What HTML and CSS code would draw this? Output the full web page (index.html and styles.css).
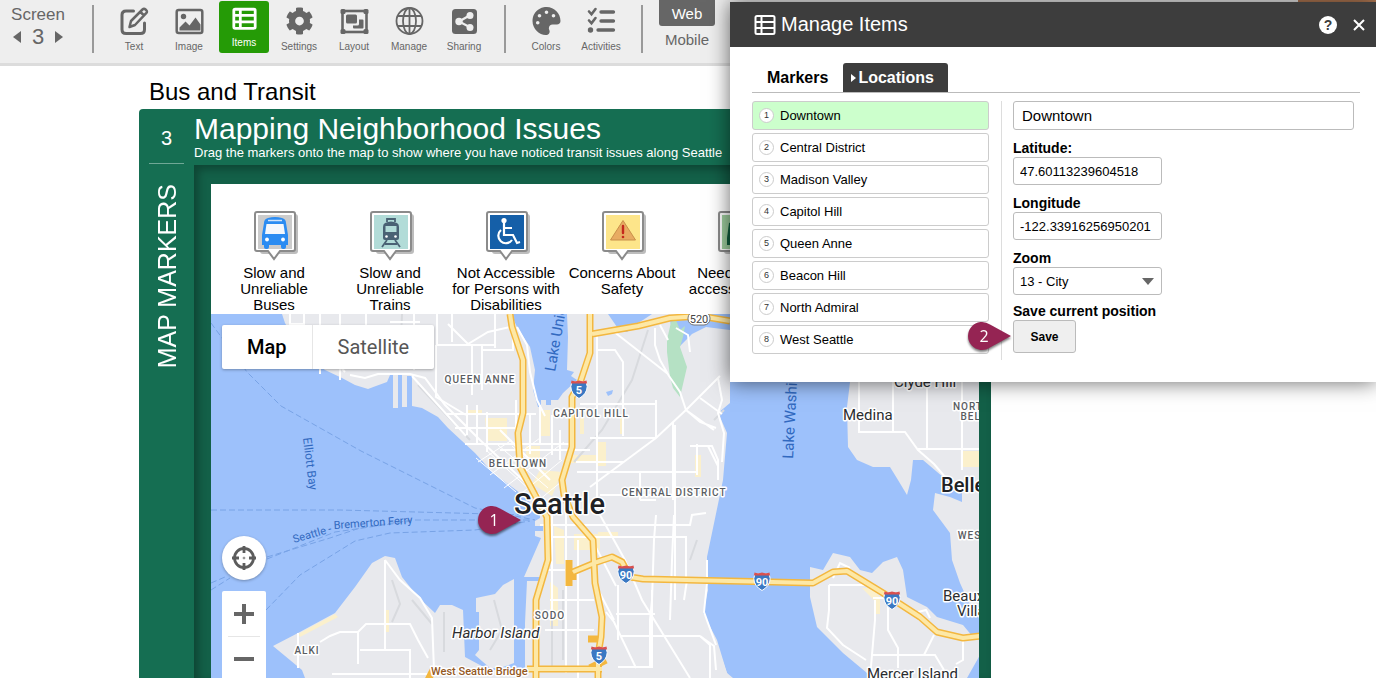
FILE: index.html
```
<!DOCTYPE html>
<html lang="en">
<head>
  <meta charset="UTF-8" />
  <meta name="viewport" content="width=device-width, initial-scale=1.0"/>
  <title>Mapping Neighborhood Issues</title>
  <link rel="stylesheet" href="styles.css">
</head>
<body>

  <header class="toolbar">
    <div class="screen-nav">
      <span class="screen-label">Screen</span>
      <div class="screen-pager">
        <button class="arrow arrow-prev" aria-label="Previous screen"></button>
        <span class="screen-number">3</span>
        <button class="arrow arrow-next" aria-label="Next screen"></button>
      </div>
    </div>

    <nav class="tools">
      <button class="tool">
        <svg class="icon" viewBox="0 0 28 28"><path d="M13 4H5.500Q1.500 4 1.500 8v14.500q0 4 4 4H20q4 0 4-4V16" fill="none" stroke="currentColor" stroke-width="3" stroke-linecap="round"/><path d="M9 20l1.500-6L22 2.500q1.500-1.500 3 0l.7.700q1.500 1.500 0 3L14.500 18zM20 5l3.500 3.500" fill="none" stroke="currentColor" stroke-width="2.500" stroke-linejoin="round"/></svg>
        Text
      </button>
      <button class="tool">
        <svg class="icon" viewBox="0 0 28 28"><rect x="1.200" y="3" width="25.600" height="23" rx="2" fill="none" stroke="currentColor" stroke-width="2.500"/><circle cx="8" cy="9.500" r="2.700" fill="currentColor"/><path d="M4 23.500v-3l6-6 4 4 6-8 5 7v6z" fill="currentColor"/></svg>
        Image
      </button>
      <button class="tool tool-active">
        <svg class="icon" viewBox="0 0 28 28"><path d="M4 3.500h20q1.500 0 1.500 1.500v17.500q0 1.500-1.500 1.500H4q-1.500 0-1.500-1.500V5q0-1.500 1.500-1.500zM2.500 10.200h23M2.500 17h23M9.500 3.500V24" fill="none" stroke="currentColor" stroke-width="3"/></svg>
        Items
      </button>
      <button class="tool">
        <svg class="icon" viewBox="0 0 512 512"><path fill="currentColor" d="M487.400 315.700l-42.600-24.600c4.300-23.200 4.300-47 0-70.200l42.600-24.600c4.900-2.800 7.100-8.600 5.500-14-11.100-35.600-30-67.800-54.700-94.600-3.800-4.100-10-5.100-14.800-2.300L380.800 110c-17.900-15.400-38.500-27.300-60.800-35.100V25.800c0-5.600-3.900-10.500-9.400-11.700-36.700-8.200-74.300-7.800-109.200 0-5.500 1.200-9.400 6.100-9.400 11.700V75c-22.200 7.900-42.800 19.800-60.800 35.100L88.700 85.500c-4.900-2.800-11-1.900-14.800 2.300-24.700 26.700-43.600 58.900-54.700 94.600-1.700 5.400.6 11.200 5.500 14L67.300 221c-4.300 23.200-4.300 47 0 70.200l-42.600 24.600c-4.900 2.800-7.100 8.600-5.500 14 11.100 35.600 30 67.800 54.700 94.600 3.800 4.100 10 5.100 14.800 2.300l42.600-24.600c17.900 15.400 38.500 27.300 60.800 35.100v49.200c0 5.600 3.900 10.500 9.400 11.700 36.700 8.200 74.300 7.800 109.200 0 5.500-1.200 9.400-6.100 9.400-11.700v-49.200c22.200-7.900 42.800-19.800 60.800-35.100l42.600 24.600c4.900 2.800 11 1.900 14.800-2.300 24.700-26.700 43.600-58.900 54.700-94.600 1.500-5.500-.7-11.300-5.600-14.100zM256 336c-44.100 0-80-35.900-80-80s35.900-80 80-80 80 35.900 80 80-35.900 80-80 80z"/></svg>
        Settings
      </button>
      <button class="tool">
        <svg class="icon" viewBox="0 0 28 28"><rect x="2" y="4" width="24" height="21" fill="none" stroke="currentColor" stroke-width="2.600"/><g fill="currentColor"><rect x="0" y="2" width="5" height="5" rx="1.500"/><rect x="23" y="2" width="5" height="5" rx="1.500"/><rect x="0" y="22" width="5" height="5" rx="1.500"/><rect x="23" y="22" width="5" height="5" rx="1.500"/><rect x="5.500" y="7.500" width="11" height="9" rx="1.500"/><path d="M18.500 12.500h3.500q1 0 1 1v7q0 1-1 1h-8.500q-1 0-1-1v-2h4.500q1.500 0 1.500-1.500z"/></g></svg>
        Layout
      </button>
      <button class="tool">
        <svg class="icon" viewBox="0 0 28 28"><g fill="none" stroke="currentColor" stroke-width="1.800"><circle cx="14" cy="14" r="13"/><ellipse cx="14" cy="14" rx="6.500" ry="13"/><path d="M14 1v26M2.500 9h23M2.500 19h23"/></g></svg>
        Manage
      </button>
      <button class="tool">
        <svg class="icon" viewBox="0 0 28 28"><rect x="1.500" y="2" width="25" height="25" rx="3.500" fill="currentColor"/><path d="M19 8.500L8.500 14.500 19 20" fill="none" stroke="#eee" stroke-width="2.200"/><g fill="#eee"><circle cx="19.500" cy="8.500" r="3.500"/><circle cx="8.500" cy="14.500" r="3.700"/><circle cx="19.500" cy="20.500" r="3.500"/></g></svg>
        Sharing
      </button>
    </nav>

    <nav class="tools tools-short">
      <button class="tool">
        <svg class="icon" viewBox="0 0 512 512"><path fill="currentColor" d="M204.300 5C104.900 24.400 24.800 104.300 5.200 203.400c-37 187 131.700 326.400 258.800 306.700 41.200-6.400 61.400-54.600 42.500-91.700-23.100-45.400 9.900-98.400 60.900-98.400h79.700c35.800 0 64.800-29.600 64.900-65.300C511.500 97.100 368.100-26.900 204.300 5zM96 320c-17.700 0-32-14.300-32-32s14.300-32 32-32 32 14.300 32 32-14.300 32-32 32zm32-128c-17.700 0-32-14.300-32-32s14.300-32 32-32 32 14.300 32 32-14.300 32-32 32zm128-64c-17.700 0-32-14.300-32-32s14.300-32 32-32 32 14.300 32 32-14.300 32-32 32zm128 64c-17.700 0-32-14.300-32-32s14.300-32 32-32 32 14.300 32 32-14.300 32-32 32z"/></svg>
        Colors
      </button>
      <button class="tool">
        <svg class="icon" viewBox="0 0 28 28"><g fill="none" stroke="currentColor" stroke-linecap="round"><path d="M13.500 5H26M13.500 14H26M10.500 23H26" stroke-width="3.300"/><path d="M1.500 4.500L4 7.300 8 2M1.500 13.500L4 16.300 8 11" stroke-width="2.600"/></g><circle cx="3" cy="23" r="2.700" fill="currentColor"/></svg>
        Activities
      </button>
    </nav>

    <div class="device">
      <button class="device-option device-active">Web</button>
      <button class="device-option">Mobile</button>
    </div>
    <span class="toolbar-accent"></span>
  </header>

  <main class="stage">
    <h1 class="page-title">Bus and Transit</h1>

    <section class="board">
      <aside class="board-side">
        <span class="board-number">3</span>
        <span class="board-caption">MAP MARKERS</span>
      </aside>
      <div class="board-main">
        <div class="board-head">
          <h2 class="board-title">Mapping Neighborhood Issues</h2>
          <p class="board-text">Drag the markers onto the map to show where you have noticed transit issues along Seattle</p>
        </div>
        <div class="board-body">
          <ul class="markers">
            <li class="marker">
              <svg class="pin" viewBox="0 0 44 50">
                <use href="#pin-frame"/>
                <rect x="4" y="4" width="34" height="34" fill="#ccc"/>
                <g fill="#2b8cf2"><path d="M10 12q0-4 4-5 7-2 14 0 4 1 4 5l2 12v10H8V24z"/><rect x="10" y="32" width="5" height="6" rx="2"/><rect x="27" y="32" width="5" height="6" rx="2"/></g>
                <path d="M12.500 13h17l1.500 10H11z" fill="#f4f8fd"/><path d="M14 9.500h14" stroke="#cfe3fa" stroke-width="1.500"/>
                <circle cx="13" cy="28.500" r="1.900" fill="#fff"/><circle cx="29" cy="28.500" r="1.900" fill="#fff"/>
              </svg>
              Slow and Unreliable Buses
            </li>
            <li class="marker">
              <svg class="pin" viewBox="0 0 44 50">
                <use href="#pin-frame"/>
                <rect x="4" y="4" width="34" height="34" fill="#b2dcd8"/>
                <path d="M15 12q6-3 12 0 2 1 2 4v11q0 2-2 2H15q-2 0-2-2V16q0-3 2-4z" fill="#4a6274"/>
                <path d="M17 29l-5 7M25 29l5 7M15 33h12M17 11V8h8v3" fill="none" stroke="#4a6274" stroke-width="1.800"/>
                <path d="M15.500 15h11v6h-11z" fill="#b2dcd8"/><circle cx="16.500" cy="25.500" r="1.300" fill="#fff"/><circle cx="25.500" cy="25.500" r="1.300" fill="#fff"/>
              </svg>
              Slow and Unreliable Trains
            </li>
            <li class="marker">
              <svg class="pin" viewBox="0 0 44 50">
                <use href="#pin-frame"/>
                <rect x="4" y="4" width="34" height="34" fill="#155fa8"/>
                <circle cx="18" cy="9.500" r="2.600" fill="#fff"/>
                <path d="M18 12v12h9l4 8 3-1M18 17h8M15 19a7.500 7.500 0 1 0 11 10" fill="none" stroke="#fff" stroke-width="2.200"/>
              </svg>
              Not Accessible for Persons with Disabilities
            </li>
            <li class="marker">
              <svg class="pin" viewBox="0 0 44 50">
                <use href="#pin-frame"/>
                <rect x="4" y="4" width="34" height="34" fill="#fde58a"/>
                <path d="M21 9.500L33.500 29h-25z" fill="#e8ab62" stroke="#c98f4a" stroke-width="1" stroke-linejoin="round"/>
                <path d="M21 15v7" stroke="#c5281c" stroke-width="2.400" stroke-linecap="round"/><circle cx="21" cy="26" r="1.300" fill="#c5281c"/>
              </svg>
              Concerns About Safety
            </li>
            <li class="marker">
              <svg class="pin" viewBox="0 0 44 50">
                <use href="#pin-frame"/>
                <rect x="4" y="4" width="34" height="34" fill="#9fcf9f"/>
                <path d="M11 12q10-5 20 0l2 15v7H9v-7z" fill="#11603f"/><path d="M13 15h16l1 8H12z" fill="#cfe8cf"/>
              </svg>
              Needs more accessible bus
            </li>
          </ul>

          <div class="map">
            <svg class="map-canvas" viewBox="211 314 768 364" preserveAspectRatio="xMinYMin slice" role="img" aria-label="Map of Seattle">
              <defs>
                <g id="pin-frame">
                  <rect x="6" y="3" width="38" height="40" rx="3" fill="#bdbdbd"/>
                  <path d="M3 1h36q2 0 2 2v35q0 2-2 2H26l-6 8-6-8H3q-2 0-2-2V3q0-2 2-2z" fill="#fff" stroke="#8b8b8b" stroke-width="2"/>
                </g>
                <g id="shield">
                  <path d="M-7-7.500h14l1.200 5Q8 5 0 9.500-8 5-8.200-2.500z" fill="#3a78c3" stroke="#fff" stroke-width="1"/>
                  <path d="M-7.500-8.500q3.500 1.500 7.500 0 4 1.500 7.500 0l.6 3H-8.100z" fill="#d8504f"/>
                </g>
              </defs>

              <!-- land -->
              <g class="land">
                <path d="M282 314L285 323 300 350 325 370 342 378 355 385 368 389 376 386 387 382 390 375H393V408H398V375H402V407H407V376H412V406L422 408 438 417 448 428 475 453 493 473 520 493 530 502 527 510 540 513V518L535 521V526H543V531H535V536L541 538 524 577H541V581H527L525 623V668L535 678H730L727 673 717 640 703 613 708 590 702 567 707 540 715 510 717 497 723 470 725 443 718 413 730 403V314z"/>
                <path d="M730 314V390L722 404 720 417 727 433 723 480 707 557V583L703 613 720 653 727 673 733 678H700V314z"/>
                <path d="M850 314V382L847 407 848 447 857 460 873 467 890 467 898 480 907 495 911 480 913 460 923 460 943 477 962 493V502L950 497 935 493 933 510 950 533 952 560 960 583 970 605 980 620V314z"/>
                <path d="M810 567L823 570 833 553 850 557 860 570 872 573 883 562 897 557 903 570 907 597 927 607 937 617 963 625 973 637 980 640V655L967 678H873L867 673 843 653 817 627 810 597z"/>
                <path d="M273 646L298 633 335 613 355 587 372 563 385 556 395 558 402 577 418 597 435 613 440 605 452 605 463 610 465 657 478 664 490 670 535 671V678H305L302 670z"/>
                <path d="M476 598L495 594 503 585 514 579V663L500 668 490 668 475 655 479 650V612H476z"/>
              </g>
              <path class="water" d="M511 314L517 327 530 347 535 370 533 390 538 407H541V400H546V405H551V400L558 400 563 393 577 380 571 376 574 372 567 370 568 337 567 314zM608 314L617 327 620 331 627 332 634 325 643 320 652 314zM670 320L684 314H730V330L706 327 692 334 680 346 674 342zM606 392L613 390 612 394 608 396z"/>
              <path class="park" d="M667 340L671 322 676 320 680 330 685 326 683 337 680 347 687 367 680 397 673 388 670 377 667 352z"/>
              <g class="built">
                <path d="M485 418h22v23h-20zM466 410h16v5h-16zM540 410h10v26h-10zM598 442h8v24h-8zM526 446h14v12h-14zM566 455h36v8h-36zM540 470l22 2-10 24-20-12zM554 526l10 4v34h-8zM574 534h26v16h-26zM598 532h20v6h-20zM550 582l8 6v38h-8zM695 455v22h6v-22zM963 451h16v16h-16zM862 588h12l6 10v16h-6v-14zM384 610h5v22h-5zM620 418h3v16h-3zM580 418h4v16h-4z"/>
                <path d="M298 634L335 614 338 617 300 637z"/>
              </g>

              <!-- terrain creases and rail lines -->
              <path class="crease" d="M648 330L632 380 602 430 574 462M552 600V670M563 590V660M578 600V670M392 580L400 604 392 622M412 600L432 624M494 600L502 630 490 650M444 612V652M402 314L400 364M418 385L470 440M697 540L690 560M724 410L714 420"/>

              <!-- local streets -->
              <g class="street">
                <path d="M290 314v10h14v-10M320 314v60M340 314v66M366 314v50M390 322h30M414 314v56M436 345h60M452 314v28M472 345v50M482 350h32M482 345v45M448 324l20 20 20-12 26-6M495 314v34M436 345v52l30 18M446 414h90M455 428h64M465 444h104M500 450h90M513 328v22M437 314v31"/>
                <path d="M350 375L365 378 378 374H410L425 378 445 405 480 440 540 496M345 372L340 366M412 376L430 396 466 436M517 327L527 345 530 372 537 400 545 416M474 414H520M500 430L550 480"/>
                <path d="M467 405v30M477 405v40M487 412v40M516 400v30M540 405v40M552 415v40M560 430v30M530 414v40"/>
                <path class="thin" d="M476 458L516 492M486 450L530 490M498 445L548 488M512 446L548 478M478 462L512 440M490 475L540 438M504 488L564 442M516 498L562 460M534 504L566 478"/>
                <path d="M597 330V498M597 350H615L623 362V436M613 331L668 374M612 330H600M655 328V345L660 360 669 376M669 376L680 392 686 410M676 328L688 335 690 352M660 325L668 340M580 404H656M590 438H656M576 462H624M577 472H697M656 400V438M686 410L714 430M720 376L686 410 656 438 590 487M675 425V600M690 446H708L718 466M697 444V475M640 472V500M686 410L700 422 716 428M673 422V500"/>
                <path d="M540 525H690L692 515 706 513M545 537H686V580M687 580L684 600M566 505V673M578 540V678M545 570H570M550 600H594M545 630H594M572 510L590 536 616 586M600 515L625 560 642 600 690 678M656 515L654 540 652 600 650 620V668M674 515L672 560 670 620M618 585V640M616 614H655M620 636H700M652 590V667H618M606 612L614 622 636 668M700 636L714 646 716 670M594 582L614 620M555 500V510M640 500L656 500M552 500V620M600 495L700 495"/>
                <path d="M385 560V624M385 560L400 580 420 598 432 618 434 670M298 633V668M320 642L330 636 340 632H358L366 624H410L418 640 428 658M358 632V664M385 624V650H410V678M332 674H430M360 650H384"/>
                <path d="M859 382V432H905L918 450 934 464 946 478M893 382V432M927 382V449M962 382V470M918 449H979M829 585H870M829 585V610L827 628 843 645 866 660M888 600V630L898 648V668M875 600V620L872 655H935L944 670M924 655L934 635M963 640V660L956 664M873 598H888M833 578L840 563 850 568M872 655L870 678M918 612L926 610 930 618"/>
                <path d="M718 378L722 400 718 413 724 433 722 462M700 398L722 414M700 446H712L718 460 718 480M707 560V583L704 612 716 645M700 636L710 645V678"/>
              </g>

              <!-- ferry routes -->
              <g class="ferry">
                <path d="M211 323L247 372 281 406 361 451 475 508 535 520M211 510H340L530 515M267 557L330 538 360 528 412 520H530M267 559L335 532 412 521M266 610L300 575 355 541 390 533 475 530 530 521M211 583L225 577M211 590L230 578"/>
              </g>

              <!-- highways -->
              <g class="road-edge">
                <path id="highways" d="M510 314L512 327 523 360V413L518 433 520 467 535 495 547 517 548 560 536 600V678M590 314V353L580 383 572 397V447L562 480 564 495 573 517 593 540 595 583 602 617 601 637 598 655V678M592 334L638 326 670 318 700 316 730 321M527 669H602M573 572L597 562 612 557 622 562 630 577 643 579 730 581 813 583 833 572 847 571 883 593 920 617 937 632 963 638 980 636M569 560V586M573 572V580M590 668L606 660M434 668L428 680M588 639H600"/>
              </g>
              <g class="road">
                <path d="M510 314L512 327 523 360V413L518 433 520 467 535 495 547 517 548 560 536 600V678M590 314V353L580 383 572 397V447L562 480 564 495 573 517 593 540 595 583 602 617 601 637 598 655V678M592 334L638 326 670 318 700 316 730 321M527 669H602M573 572L597 562 612 557 622 562 630 577 643 579 730 581 813 583 833 572 847 571 883 593 920 617 937 632 963 638 980 636"/>
              </g>

              <!-- route shields -->
              <g class="shield-text">
                <use href="#shield" x="579" y="389"/><text x="579" y="394">5</text>
                <use href="#shield" x="626" y="574"/><text x="626" y="579">90</text>
                <use href="#shield" x="762" y="581"/><text x="762" y="586">90</text>
                <use href="#shield" x="892" y="600"/><text x="892" y="605">90</text>
                <use href="#shield" x="599" y="655"/><text x="599" y="660">5</text>
              </g>
              <rect x="688" y="312" width="22" height="13" rx="6" fill="#fff" stroke="#777"/>
              <text class="route" x="699" y="323">520</text>

              <!-- place names -->
              <g class="district">
                <text x="480" y="383">QUEEN ANNE</text>
                <text x="591" y="417">CAPITOL HILL</text>
                <text x="518" y="467">BELLTOWN</text>
                <text x="674" y="496">CENTRAL DISTRICT</text>
                <text x="550" y="619">SODO</text>
                <text x="307" y="654">ALKI</text>
                <text x="972" y="410">NORTH</text>
                <text x="988" y="420">BELLEVUE</text>
                <text x="973" y="539">WEST</text>
              </g>
              <g class="town">
                <text x="843" y="420">Medina</text>
                <text x="894" y="387">Clyde Hill</text>
                <text x="943" y="601">Beaux</text>
                <text x="957" y="616">Village</text>
                <text x="867" y="679">Mercer Island</text>
                <text class="island" x="452" y="638">Harbor Island</text>
              </g>
              <text class="city-large" x="514" y="514">Seattle</text>
              <text class="city" x="941" y="492">Bellevue</text>
              <text class="bridge" x="431" y="675">West Seattle Bridge</text>
              <g class="water-name">
                <text transform="translate(303 438) rotate(83)">Elliott Bay</text>
                <text class="ferry-name" transform="translate(294 543) rotate(-16)">Seattle -</text>
                <text class="ferry-name" transform="translate(334 529) rotate(-4)">Bremerton Ferry</text>
                <text class="lake" transform="translate(555 372) rotate(-80)">Lake Union</text>
                <text class="lake" transform="translate(793 459) rotate(-87)">Lake Washington</text>
              </g>
            </svg>

            <div class="map-types">
              <button class="map-type map-type-active">Map</button>
              <button class="map-type">Satellite</button>
            </div>
            <div class="map-controls">
              <button class="locate" aria-label="Reset position">
                <svg viewBox="0 0 24 24" width="24" height="24" fill="none" stroke="#5c5c5c" stroke-width="2.800"><circle cx="12" cy="12" r="9.500"/><path d="M12 0v7M12 17v7M0 12h7M17 12h7"/><circle cx="12" cy="12" r=".3" stroke-width="2"/></svg>
              </button>
              <div class="zoom">
                <button class="zoom-button" aria-label="Zoom in"><svg viewBox="0 0 20 20" width="20" height="20" stroke="#666" stroke-width="4"><path d="M10 0v20M0 10h20"/></svg></button>
                <button class="zoom-button" aria-label="Zoom out"><svg viewBox="0 0 20 20" width="20" height="20" stroke="#666" stroke-width="4"><path d="M0 10h20"/></svg></button>
              </div>
            </div>
            <svg class="callout callout-map" viewBox="0 0 46 32"><path d="M44 15L23 26.500A14 14 0 1 1 23 3.500z"/><text x="17" y="21">1</text></svg>
          </div>
        </div>
      </div>
    </section>
  </main>

  <section class="dialog" role="dialog" aria-labelledby="dialog-title">
    <header class="dialog-head">
      <svg class="dialog-icon" viewBox="0 0 22 22"><path d="M3 2h16q1.500 0 1.500 1.500v15q0 1.500-1.500 1.500H3q-1.500 0-1.500-1.500v-15Q1.500 2 3 2zM1.500 8h19M1.500 14h19M7.500 2v18" fill="none" stroke="currentColor" stroke-width="2"/></svg>
      <h2 class="dialog-title" id="dialog-title">Manage Items</h2>
      <button class="help" aria-label="Help">?</button>
      <button class="close" aria-label="Close"><svg viewBox="0 0 12 12" width="12" height="12" stroke="currentColor" stroke-width="2"><path d="M1 1l10 10M11 1L1 11"/></svg></button>
    </header>

    <div class="dialog-content">
      <div class="tabs">
        <button class="tab">Markers</button>
        <button class="tab tab-active">Locations</button>
      </div>

      <div class="panes">
        <ol class="locations">
          <li><button class="location location-active"><span class="badge">1</span>Downtown</button></li>
          <li><button class="location"><span class="badge">2</span>Central District</button></li>
          <li><button class="location"><span class="badge">3</span>Madison Valley</button></li>
          <li><button class="location"><span class="badge">4</span>Capitol Hill</button></li>
          <li><button class="location"><span class="badge">5</span>Queen Anne</button></li>
          <li><button class="location"><span class="badge">6</span>Beacon Hill</button></li>
          <li><button class="location"><span class="badge">7</span>North Admiral</button></li>
          <li><button class="location"><span class="badge">8</span>West Seattle</button></li>
        </ol>

        <form class="details">
          <input class="field field-name" type="text" value="Downtown" aria-label="Name" />
          <label class="label" for="latitude">Latitude:</label>
          <input class="field" type="text" id="latitude" value="47.60113239604518" />
          <label class="label" for="longitude">Longitude</label>
          <input class="field" type="text" id="longitude" value="-122.33916256950201" />
          <label class="label" for="zoom">Zoom</label>
          <div class="select-wrap">
            <select class="field" id="zoom">
              <option>13 - City</option>
            </select>
          </div>
          <label class="label" for="save">Save current position</label>
          <div class="save-row">
            <button class="save" type="button" id="save">Save</button>
            <svg class="callout callout-save" viewBox="0 0 46 32"><path d="M44 15L23 26.500A14 14 0 1 1 23 3.500z"/><text x="17" y="21">2</text></svg>
          </div>
        </form>
      </div>
    </div>
  </section>

</body>
</html>
```
FILE: styles.css
```
* {
  box-sizing: border-box;
}
body {
  display: flex;
  flex-direction: column;
  height: 100vh;
  margin: 0;
  overflow: hidden;
  position: relative;
  font-family: "Liberation Sans", Arial, sans-serif;
  background: #fff;
  color: #000;
}
button, input, select {
  font-family: inherit;
  margin: 0;
}
button {
  padding: 0;
  border: 0;
  background: none;
  cursor: pointer;
}
h1, h2, p, ul, ol {
  margin: 0;
  padding: 0;
  font-weight: normal;
  list-style: none;
}

/* toolbar */
.toolbar {
  display: flex;
  align-items: flex-start;
  flex: none;
  height: 66px;
  background: #eee;
  border-bottom: 3px solid #dcdcdc;
  color: #666;
}
.screen-nav {
  width: 76px;
  padding-top: 5px;
  text-align: center;
}
.screen-label {
  display: block;
  font-size: 17px;
  line-height: 20px;
}
.screen-pager {
  display: flex;
  align-items: center;
  justify-content: center;
  gap: 11px;
}
.screen-number {
  font-size: 22px;
  line-height: 24px;
}
.arrow {
  border: 6px solid transparent;
}
.arrow-prev {
  border-right: 8px solid #666;
  border-left: 0;
}
.arrow-next {
  border-left: 8px solid #666;
  border-right: 0;
}
.tools {
  display: flex;
  gap: 5px;
  margin-left: 16px;
  padding: 1px 15px 0 16px;
}
.tools::before,
.device::before {
  content: "";
  width: 2px;
  height: 48px;
  margin-top: 4px;
  background: #999;
}
.tools::before {
  margin-left: -16px;
  margin-right: 10px;
}
.tools-short {
  margin-left: 0;
}
.tool {
  display: flex;
  flex-direction: column;
  align-items: center;
  width: 50px;
  height: 52px;
  padding-top: 6px;
  color: #666;
  font-size: 10px;
  line-height: 12px;
}
.icon {
  width: 29px;
  height: 28px;
  margin-bottom: 6px;
}
.tool-active {
  padding-top: 5px;
  border-radius: 3px;
  background: #259b06;
  color: #fff;
}
.tool-active .icon {
  height: 26px;
  margin-bottom: 5px;
}
.device {
  display: grid;
  grid-template-columns: 2px 56px;
  column-gap: 16px;
}
.device::before {
  grid-row: span 2;
  margin-top: 5px;
}
.device-option {
  height: 26px;
  color: #666;
  font-size: 15px;
}
.device-active {
  border-radius: 0 0 3px 3px;
  background: #666;
  color: #fff;
}
.toolbar-accent {
  width: 78px;
  height: 3px;
  margin-left: auto;
  background: #b47a54;
}

/* board */
.stage {
  display: flex;
  flex-direction: column;
  flex: 1;
  min-height: 0;
  padding: 12px 28% 0 139px;
}
.page-title {
  padding: 0 10px;
  font-size: 24px;
  line-height: 28px;
  margin-bottom: 3px;
}
.board {
  display: flex;
  flex: 1;
  width: 852px;
  max-width: 100%;
  min-height: 0;
  border-radius: 4px 0 0 0;
  background: #156e52;
  color: #fff;
}
.board-side {
  display: flex;
  flex-direction: column;
  align-items: center;
  flex: none;
  width: 55px;
}
.board-number {
  width: 35px;
  padding: 17px 0 13px;
  border-bottom: 1px solid #6fa896;
  font-size: 20px;
  line-height: 24px;
  text-align: center;
}
.board-caption {
  margin-top: 20px;
  font-size: 25px;
  line-height: 28px;
  writing-mode: vertical-rl;
  transform: rotate(180deg);
}
.board-main {
  display: flex;
  flex-direction: column;
  flex: 1;
  min-width: 0;
}
.board-head {
  height: 56px;
  padding-top: 3px;
  overflow: hidden;
  white-space: nowrap;
}
.board-title {
  font-size: 30px;
  line-height: 33px;
}
.board-text {
  font-size: 13px;
  line-height: 15px;
}
.board-body {
  display: flex;
  flex-direction: column;
  flex: 1;
  min-height: 0;
  padding: 19px 12px 0 17px;
  background: #136048;
  box-shadow: inset 4px 4px 8px rgba(0, 0, 0, 0.3);
}
.markers {
  display: flex;
  flex: none;
  height: 130px;
  padding: 27px 0 0 5px;
  overflow: hidden;
  background: #fff;
  color: #000;
}
.marker {
  display: flex;
  flex-direction: column;
  align-items: center;
  flex: none;
  width: 116px;
  padding: 0 3px;
  font-size: 15px;
  line-height: 16px;
  text-align: center;
}
.pin {
  flex: none;
  width: 44px;
  height: 50px;
  margin: 0 0 4px 4px;
}

/* map */
.map {
  flex: 1;
  min-height: 0;
  position: relative;
  overflow: hidden;
  background: #9dc1fb;
  font-family: Roboto, sans-serif;
}
.map-canvas {
  position: absolute;
  width: 100%;
  height: 100%;
}
.land {
  fill: #e8e9ed;
}
.water {
  fill: #9dc1fb;
}
.park {
  fill: #b5e1c4;
}
.built {
  fill: #fbf0cc;
}
.crease {
  fill: none;
  stroke: #d8dade;
  stroke-width: 2;
}
.street {
  fill: none;
  stroke: #fff;
  stroke-width: 2;
}
.street .thin {
  stroke-width: 1;
}
.ferry {
  fill: none;
  stroke: #78a3e6;
  stroke-dasharray: 6 3;
}
.road-edge, .road {
  fill: none;
  stroke: #f3b73f;
  stroke-width: 7;
  stroke-linejoin: round;
}
.road {
  stroke: #fde8a6;
  stroke-width: 4;
}
.shield-text {
  fill: #fff;
  font-size: 11px;
  font-weight: bold;
  text-anchor: middle;
}
.route {
  fill: #444;
  font-size: 11px;
  text-anchor: middle;
}
.district, .town, .city, .city-large, .bridge {
  paint-order: stroke;
  stroke: #fff;
  stroke-width: 3;
  stroke-linejoin: round;
}
.district {
  fill: #5a5d62;
  font-size: 10px;
  font-weight: 500;
  letter-spacing: 1px;
  text-anchor: middle;
}
.town {
  fill: #2b2d30;
  font-size: 15px;
}
.island {
  font-style: italic;
}
.city {
  fill: #202124;
  font-size: 20px;
  font-weight: 500;
}
.city-large {
  fill: #202124;
  font-size: 29px;
  font-weight: 500;
}
.bridge {
  fill: #94591f;
  font-size: 11px;
  font-weight: 500;
}
.water-name {
  fill: #3169c0;
  font-size: 12px;
}
.water-name .ferry-name {
  font-size: 11px;
}
.water-name .lake {
  font-size: 15px;
}
.map-types {
  display: flex;
  position: absolute;
  top: 11px;
  left: 11px;
  border-radius: 2px;
  background: #fff;
  box-shadow: 0 1px 3px rgba(0, 0, 0, 0.3);
}
.map-type {
  height: 44px;
  padding: 0 25px;
  color: #565656;
  font-family: inherit;
  font-size: 20px;
}
.map-type-active {
  border-right: 1px solid #e6e6e6;
  color: #000;
  font-weight: 500;
}
.map-controls {
  display: flex;
  flex-direction: column;
  gap: 11px;
  position: absolute;
  top: 222px;
  left: 11px;
}
.locate {
  display: grid;
  place-items: center;
  width: 44px;
  height: 44px;
  border-radius: 50%;
  background: #fff;
  box-shadow: 0 1px 3px rgba(0, 0, 0, 0.3);
}
.zoom {
  width: 44px;
  padding: 0 6px;
  border-radius: 2px;
  background: #fff;
}
.zoom-button {
  display: grid;
  place-items: center;
  width: 32px;
  height: 45px;
}
.zoom-button + .zoom-button {
  border-top: 1px solid #e6e6e6;
}
.callout {
  position: absolute;
  width: 46px;
  height: 32px;
  fill: #952453;
  filter: drop-shadow(0 2px 1px rgba(0, 0, 0, 0.5));
}
.callout text {
  fill: #fff;
  font-family: "Open Sans", sans-serif;
  font-size: 16px;
  text-anchor: middle;
}
.callout-map {
  top: 191px;
  left: 266px;
}
.callout-save {
  top: 1px;
  right: 100%;
}

/* manage items dialog */
.dialog {
  position: absolute;
  top: 2px;
  right: 0;
  width: 646px;
  max-width: 100%;
  background: #fff;
  box-shadow: 0 0 20px rgba(0, 0, 0, 0.6);
}
.dialog-head {
  display: flex;
  align-items: center;
  height: 45px;
  padding: 0 11px 0 24px;
  background: #3d3d3d;
  color: #fff;
}
.dialog-icon {
  width: 22px;
  height: 22px;
}
.dialog-title {
  flex: 1;
  margin-left: 5px;
  font-size: 20px;
}
.help {
  width: 18px;
  height: 18px;
  margin-right: 16px;
  border-radius: 50%;
  background: #fff;
  color: #3d3d3d;
  font-size: 14px;
  font-weight: bold;
  line-height: 18px;
}
.close {
  display: flex;
  color: #fff;
}
.dialog-content {
  padding: 16px 16px 22px 22px;
}
.tabs {
  display: flex;
  border-bottom: 1px solid #bbb;
}
.tab {
  height: 29px;
  padding: 0 15px;
  font-size: 16px;
  font-weight: bold;
}
.tab-active {
  display: flex;
  align-items: center;
  gap: 2px;
  padding: 0 14px 0 8px;
  border-radius: 3px 3px 0 0;
  background: #3d3d3d;
  color: #fff;
}
.tab-active::before {
  content: "";
  border: 4px solid transparent;
  border-left: 5px solid #fff;
  border-right: 0;
}
.panes {
  display: grid;
  grid-template-columns: 250px 1fr;
  margin-top: 8px;
}
.locations {
  display: flex;
  flex-direction: column;
  gap: 3px;
  padding: 0 12px 6px 0;
  border-right: 1px solid #ddd;
}
.location {
  display: flex;
  align-items: center;
  gap: 6px;
  width: 100%;
  height: 29px;
  padding: 0 6px;
  border: 1px solid #ccc;
  border-radius: 3px;
  font-size: 13px;
}
.location-active {
  background: #cfc;
}
.badge {
  width: 15px;
  height: 15px;
  border: 1px solid #ccc;
  border-radius: 50%;
  background: #fff;
  color: #333;
  font-size: 9px;
  line-height: 13px;
  text-align: center;
}
.details {
  display: flex;
  flex-direction: column;
  align-items: flex-start;
  padding: 0 6px 0 11px;
}
.label {
  margin-top: 9px;
  font-size: 14px;
  font-weight: bold;
  line-height: 18px;
}
.field {
  width: 149px;
  height: 28px;
  padding: 0 6px;
  border: 1px solid #bbb;
  border-radius: 3px;
  background: #fff;
  color: #000;
  font-size: 13px;
}
.field-name {
  width: 100%;
  height: 29px;
  padding: 0 8px;
  font-size: 15px;
}
.select-wrap {
  position: relative;
}
.select-wrap select {
  display: block;
  appearance: none;
}
.select-wrap::after {
  content: "";
  position: absolute;
  top: 11px;
  right: 8px;
  border: 6px solid transparent;
  border-top: 7px solid #666;
  border-bottom: 0;
  pointer-events: none;
}
.label[for="save"] {
  margin-top: 7px;
}
.save-row {
  position: relative;
}
.save {
  width: 63px;
  height: 33px;
  border: 1px solid #bbb;
  border-radius: 3px;
  background: #efefef;
  font-size: 12px;
  font-weight: bold;
}
```
